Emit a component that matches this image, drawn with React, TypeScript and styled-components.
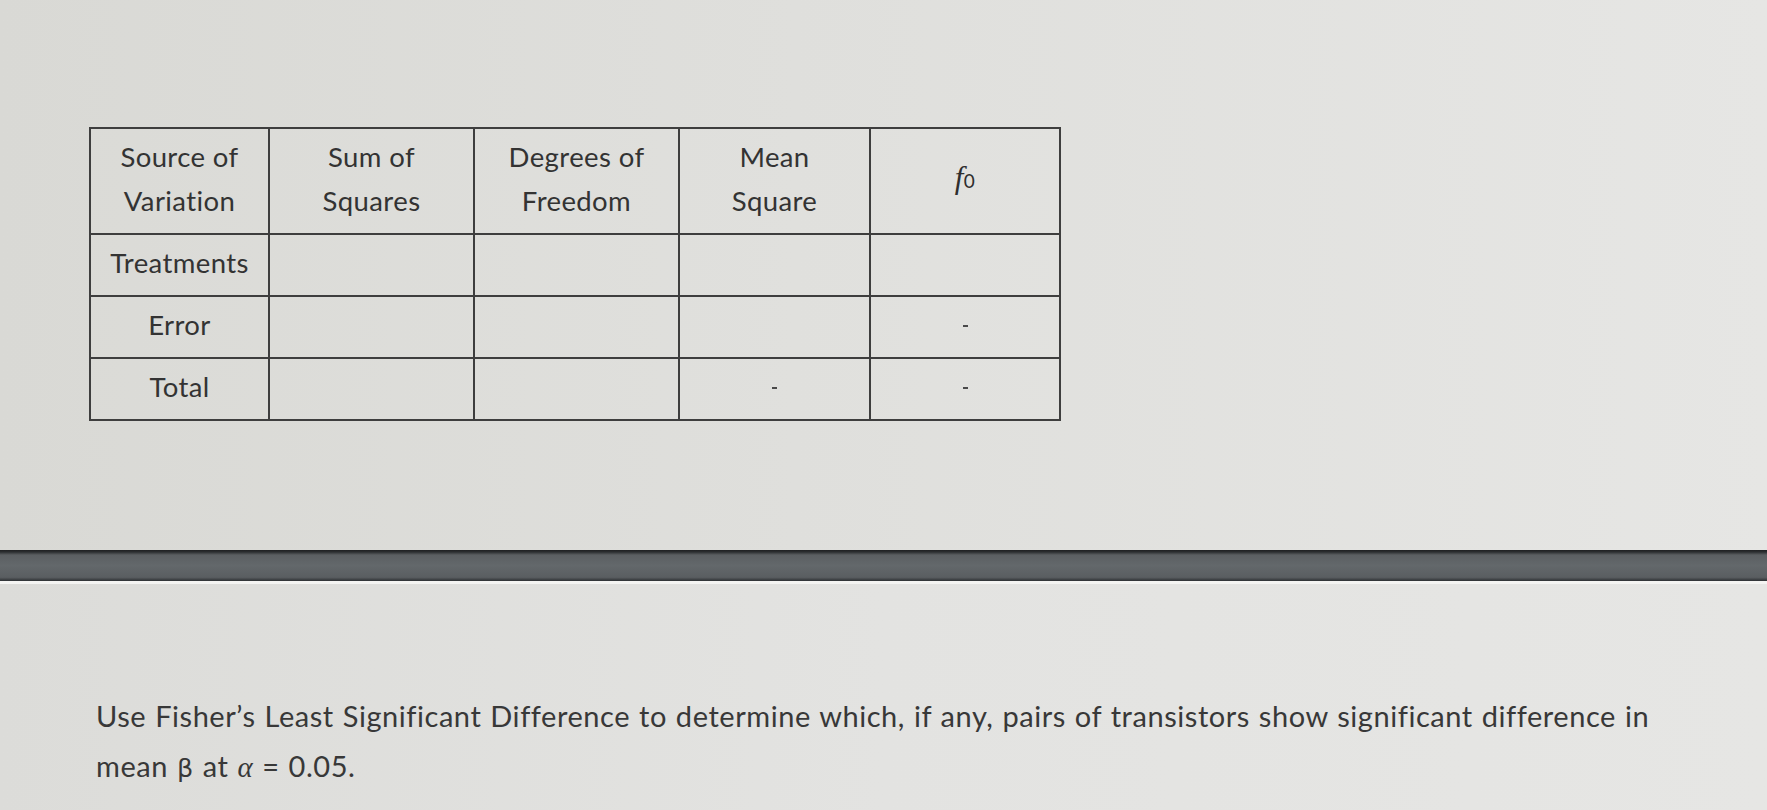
import styled, { createGlobalStyle } from "styled-components";

const GlobalStyle = createGlobalStyle`
  html, body {
    margin: 0;
    padding: 0;
    background: #dfdfdc;
  }
  body {
    font-family: Lato, "Open Sans", sans-serif;
  }
`

const Page = styled.div`
  width: 1767px;
  height: 810px;
  display: flex;
  flex-direction: column;
  overflow: hidden;
`

const TopPanel = styled.section`
  height: 550px;
  box-sizing: border-box;
  padding: 127px 0 0 89px;
  background: linear-gradient(90deg, #d9d9d5 0%, #dfdfdc 45%, #e6e6e4 100%);
`

const Divider = styled.div`
  height: 34px;
  box-sizing: border-box;
  background: linear-gradient(180deg, #1e2022 0px, #2c2f31 2px, #5b5f62 5px, #63686b 50%, #5a5e61 88%, #2d3033 100%);
  border-bottom: 3px solid #f4f4f2;
`

const BottomPanel = styled.section`
  flex: 1;
  box-sizing: border-box;
  padding: 107px 0 0 96px;
  background: linear-gradient(90deg, #dcdcd9 0%, #e3e3e1 50%, #e6e6e4 100%);
`

const Question = styled.p`
  margin: 0;
  font-family: Lato, "Open Sans", sans-serif;
  font-size: 29px;
  letter-spacing: 0.55px;
  word-spacing: 1px;
  line-height: 50px;
  color: #383838;
  white-space: nowrap;
`

const Greek = styled.span`
  font-family: "DejaVu Sans", sans-serif;
  font-size: 0.88em;
`

const Alpha = styled.span`
  font-family: "Liberation Serif", serif;
  font-style: italic;
`

const Table = styled.table`
  border-collapse: collapse;
  table-layout: fixed;
  width: 970px;
  color: #333333;
`

const Col = styled.col<{ $w: number }>`
  width: ${(p) => p.$w}px;
`

const Row = styled.tr<{ $h: number }>`
  height: ${(p) => p.$h}px;
`

const Cell = styled.td`
  border: 2px solid #3e3e3e;
  text-align: center;
  vertical-align: middle;
  padding: 0 0 4px;
  font-family: Lato, "Open Sans", sans-serif;
  font-size: 27.5px;
  letter-spacing: 0.4px;
  line-height: 44px;
  background: rgba(255, 255, 255, 0.04);
`

const Dash = styled.span`
  display: inline-block;
  width: 5px;
  height: 2px;
  vertical-align: middle;
  margin-bottom: 4px;
  background: #4a4a4a;
`

const FZero = styled.span`
  font-family: "Liberation Serif", serif;
  font-size: 31px;
  font-style: italic;
  color: #2e2e2e;
  sub {
    font-style: normal;
    font-family: Lato, sans-serif;
    font-size: 19px;
    vertical-align: 0;
  }
`

const headers = [
  ["Source of", "Variation"],
  ["Sum of", "Squares"],
  ["Degrees of", "Freedom"],
  ["Mean", "Square"],
]

const rows: { label: string; dashes: boolean[] }[] = [
  { label: "Treatments", dashes: [false, false, false, false] },
  { label: "Error", dashes: [false, false, false, true] },
  { label: "Total", dashes: [false, false, true, true] },
]

const App = () => {
  return (
    <Page>
      <GlobalStyle />
      <TopPanel>
        <Table>
          <colgroup>
            <Col $w={179} />
            <Col $w={205} />
            <Col $w={205} />
            <Col $w={191} />
            <Col $w={190} />
          </colgroup>
          <tbody>
            <Row $h={106}>
              {headers.map((h) => (
                <Cell key={h[0]}>
                  {h[0]}
                  <br />
                  {h[1]}
                </Cell>
              ))}
              <Cell>
                <FZero>
                  f<sub>0</sub>
                </FZero>
              </Cell>
            </Row>
            {rows.map((r) => (
              <Row $h={62} key={r.label}>
                <Cell>{r.label}</Cell>
                {r.dashes.map((d, i) => (
                  <Cell key={i}>{d ? <Dash /> : null}</Cell>
                ))}
              </Row>
            ))}
          </tbody>
        </Table>
      </TopPanel>
      <Divider />
      <BottomPanel>
        <Question>
          Use Fisher’s Least Significant Difference to determine which, if any, pairs of transistors show significant
          difference in
          <br />
          mean <Greek>β</Greek> at <Alpha>α</Alpha> = 0.05.
        </Question>
      </BottomPanel>
    </Page>
  )
}

export default App;
